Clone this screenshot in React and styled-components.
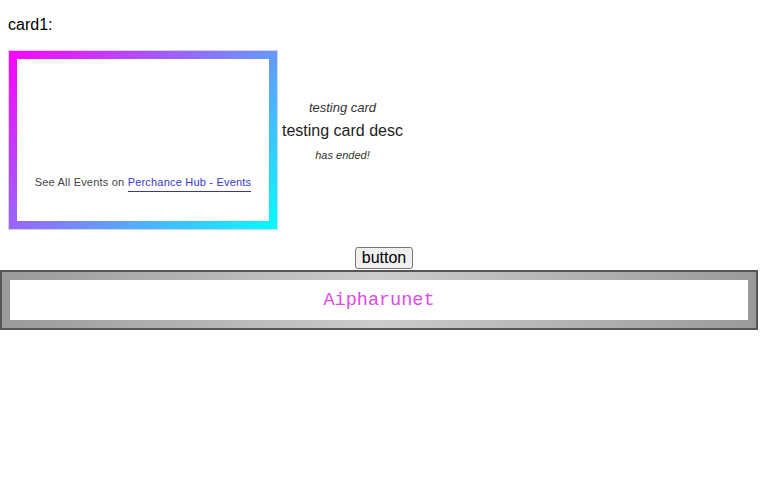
import React from 'react';
import styled, { createGlobalStyle } from 'styled-components';

const GlobalStyle = createGlobalStyle`
  body {
    margin: 0;
    padding: 8px;
    font-family: "Liberation Sans", Arial, sans-serif;
    background: #fff;
    color: #000;
  }
`;

const Label = styled.p`
  margin: 8px 0 16px;
  font-size: 16px;
  line-height: 18px;
`;

const CardRow = styled.div`
  display: flex;
  align-items: flex-start;
  gap: 4px;
`;

const Card = styled.div`
  box-sizing: border-box;
  width: 270px;
  height: 180px;
  padding: 8px;
  border: 1px solid #d4d4e4;
  background: linear-gradient(135deg, #ff00ff, #00ffff);
`;

const CardBody = styled.div`
  height: 100%;
  background: #fff;
  display: flex;
  flex-direction: column;
  justify-content: flex-end;
  align-items: center;
  padding-bottom: 29px;
  box-sizing: border-box;
`;

const EventsNote = styled.div`
  font-size: 11px;
  line-height: 13px;
  letter-spacing: 0.2px;
  color: #444;
`;

const HubLink = styled.a`
  display: inline-block;
  line-height: 12px;
  padding-bottom: 3px;
  color: #3838cc;
  text-decoration: none;
  border-bottom: 1px solid #3333bb;
`;

const Info = styled.div`
  padding-top: 48px;
  text-align: center;
  color: #222;
`;

const InfoLine = styled.div`
  font-size: ${(p) => p.$size}px;
  line-height: ${(p) => p.$lh}px;
  font-style: ${(p) => (p.$italic ? 'italic' : 'normal')};
  color: ${(p) => (p.$italic ? '#333' : '#222')};
`;

const ButtonRow = styled.div`
  margin-top: 17px;
  height: 22px;
  display: flex;
  justify-content: center;
`;

const Button = styled.button`
  font-family: "Liberation Sans", Arial, sans-serif;
  font-size: 16px;
  line-height: 18px;
  padding: 1px 6px;
  border: 1px solid #767676;
  border-radius: 3px;
  background: #efefef;
  color: #000;
`;

const Footer = styled.div`
  box-sizing: border-box;
  margin-top: 1px;
  margin-left: -8px;
  width: calc(100% + 6px);
  height: 60px;
  padding: 8px;
  border: 2px solid #555;
  background: linear-gradient(to right, #9a9a9a, #cccccc 50%, #9a9a9a);
`;

const FooterInner = styled.div`
  height: 100%;
  background: #fff;
  display: flex;
  align-items: center;
  justify-content: center;
  font-family: "Liberation Mono", "Courier New", monospace;
  font-size: 18.5px;
  color: #e048e8;
`;

export default function App() {
  return (
    <>
      <GlobalStyle />
      <Label>card1:</Label>
      <CardRow>
        <Card>
          <CardBody>
            <EventsNote>
              See All Events on <HubLink href="#">Perchance Hub - Events</HubLink>
            </EventsNote>
          </CardBody>
        </Card>
        <Info>
          <InfoLine $size={13} $lh={20} $italic>testing card</InfoLine>
          <InfoLine $size={16} $lh={26}>testing card desc</InfoLine>
          <InfoLine $size={11} $lh={22} $italic>has ended!</InfoLine>
        </Info>
      </CardRow>
      <ButtonRow>
        <Button>button</Button>
      </ButtonRow>
      <Footer>
        <FooterInner>Aipharunet</FooterInner>
      </Footer>
    </>
  );
}
